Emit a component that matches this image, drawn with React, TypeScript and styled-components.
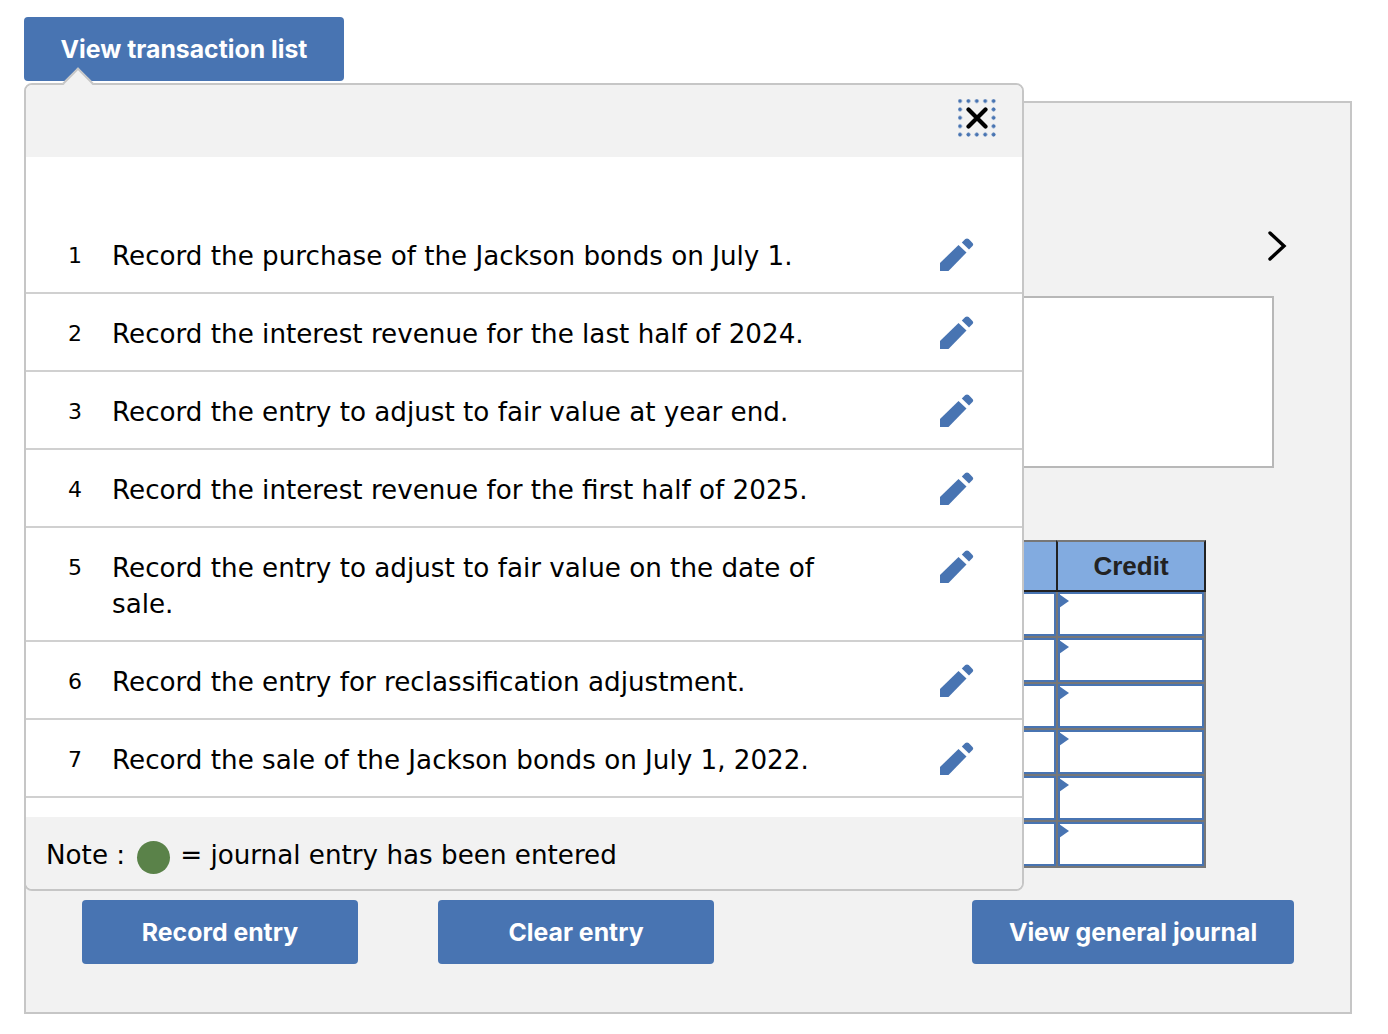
import React from "react";
import styled, { createGlobalStyle } from "styled-components";

const Blue = "#4874b2";
const PanelGrey = "#f2f2f2";
const LineGrey = "#c6c6c6";

const GlobalStyle = createGlobalStyle`
  html, body {
    margin: 0;
    padding: 0;
    background: #fff;
  }
`;

const Page = styled.div`
  position: relative;
  width: 1388px;
  height: 1034px;
  padding: 17px 36px 0 24px;
  box-sizing: border-box;
`;

const ActionButton = styled.button<{ $width: number; $offset?: number }>`
  display: block;
  flex: none;
  width: ${(p) => p.$width}px;
  height: 64px;
  margin-left: ${(p) => p.$offset ?? 0}px;
  padding: 0;
  border: 0;
  border-radius: 4px;
  background: ${Blue};
  color: #fff;
  font-family: "Inter", "Liberation Sans", sans-serif;
  font-size: 24.8px;
  font-weight: 700;
`;

const MainPanel = styled.div`
  box-sizing: border-box;
  height: 913px;
  margin-top: 20px;
  padding: 0 56px;
  border: 2px solid ${LineGrey};
  background: ${PanelGrey};
  display: flex;
  flex-direction: column;
`;

const NextRow = styled.div`
  display: flex;
  justify-content: flex-end;
  height: 193px;
  padding: 128px 7px 0 0;
  box-sizing: border-box;
  color: #000;
`;

const InfoBox = styled.div`
  box-sizing: border-box;
  height: 172px;
  margin-right: 20px;
  border: 2px solid #b8b8b8;
  background: #fff;
`;

const JournalTable = styled.div`
  margin: 72px 88px 0 0;
`;

const HeaderRow = styled.div`
  display: grid;
  grid-template-columns: 1fr 150px;
  height: 52px;
`;

const HeaderCell = styled.div`
  box-sizing: border-box;
  border-top: 2px solid #777;
  border-bottom: 2px solid #222;
  background: #82abe0;
  color: #222;
  font-family: "Liberation Sans", Arial, sans-serif;
  font-size: 26px;
  font-weight: 700;
  display: flex;
  align-items: center;
  justify-content: center;
`;

const CreditHeader = styled(HeaderCell)`
  border-left: 2px solid #222;
  border-right: 2px solid #222;
`;

const EntryGrid = styled.div`
  display: grid;
  grid-template-columns: 1fr 146px;
  gap: 2px;
  padding: 0 2px 2px 0;
  background: #777;
`;

const EntryCell = styled.div`
  position: relative;
  box-sizing: border-box;
  height: 44px;
  background: #fff;
  border: 2px solid ${Blue};
`;

const CellArrow = styled.span`
  position: absolute;
  left: -1px;
  top: 0;
  width: 0;
  height: 0;
  border-top: 7px solid transparent;
  border-bottom: 7px solid transparent;
  border-left: 10px solid ${Blue};
`;

const ButtonRow = styled.div`
  display: flex;
  margin-top: 32px;
`;

const Popover = styled.div`
  position: absolute;
  left: 24px;
  top: 83px;
  box-sizing: border-box;
  width: 1000px;
  height: 808px;
  border: 2px solid ${LineGrey};
  border-radius: 8px;
  background: #fff;
  display: flex;
  flex-direction: column;
  font-family: "DejaVu Sans", Verdana, sans-serif;
  color: #000;
`;

const Notch = styled.span`
  position: absolute;
  box-sizing: border-box;
  left: 41px;
  top: -13px;
  width: 22px;
  height: 22px;
  background: ${PanelGrey};
  border-left: 2px solid ${LineGrey};
  border-top: 2px solid ${LineGrey};
  transform: rotate(45deg);
`;

const PopoverHeader = styled.div`
  flex: none;
  height: 72px;
  padding: 14px 26px 0 0;
  box-sizing: border-box;
  background: ${PanelGrey};
  border-radius: 6px 6px 0 0;
  display: flex;
  justify-content: flex-end;
`;

const CloseButton = styled.button`
  width: 38px;
  height: 38px;
  padding: 0;
  border: 0;
  background-color: transparent;
  background-image: radial-gradient(circle, ${Blue} 1.7px, transparent 2.2px);
  background-size: 8.4px 8.4px;
  background-position: -2.2px -2.2px;
  position: relative;
  display: flex;
  align-items: center;
  justify-content: center;

  &::before {
    content: "";
    position: absolute;
    inset: 5px;
    background: ${PanelGrey};
  }

  svg {
    position: relative;
  }
`;

const TransactionList = styled.ol`
  flex: 1;
  margin: 0;
  padding: 59px 0 0;
  list-style: none;
`;

const TransactionRow = styled.li`
  display: flex;
  padding: 22px 48px 18px 42px;
  border-bottom: 2px solid #d0d0d0;
`;

const RowNumber = styled.span`
  width: 44px;
  flex: none;
  font-size: 22px;
  line-height: 36px;
`;

const RowText = styled.span`
  width: 730px;
  flex: none;
  font-size: 26.2px;
  line-height: 36px;
`;

const EditIcon = styled.svg`
  margin-left: auto;
  width: 34px;
  height: 34px;
  fill: ${Blue};
`;

const NoteBar = styled.div`
  flex: none;
  height: 72px;
  padding: 4px 0 0 20px;
  box-sizing: border-box;
  background: ${PanelGrey};
  border-radius: 0 0 6px 6px;
  display: flex;
  align-items: center;
  font-size: 26.2px;
  white-space: pre;
`;

const StatusDot = styled.span`
  width: 33px;
  height: 33px;
  margin: 5px 10px 0 12px;
  border-radius: 50%;
  background: #5a8249;
`;

const transactions = [
  "Record the purchase of the Jackson bonds on July 1.",
  "Record the interest revenue for the last half of 2024.",
  "Record the entry to adjust to fair value at year end.",
  "Record the interest revenue for the first half of 2025.",
  "Record the entry to adjust to fair value on the date of sale.",
  "Record the entry for reclassification adjustment.",
  "Record the sale of the Jackson bonds on July 1, 2022.",
];

const Pencil = () => (
  <EditIcon viewBox="0 0 34 34">
    <path d="M18.5 7 L26.5 14.5 L8.5 33 L0 33 L0 25 Z" />
    <path d="M21.8 4.6 L25.3 1.1 Q27 -.3 28.7 1.1 L32.5 4.9 Q33.9 6.4 32.5 8 L29 11.5 Z" />
  </EditIcon>
);

export default function App() {
  return (
    <Page>
      <GlobalStyle />
      <ActionButton $width={320}>View transaction list</ActionButton>

      <MainPanel>
        <NextRow>
          <svg width="20" height="30" viewBox="0 0 20 30" fill="none" stroke="currentColor" strokeWidth="3.4" strokeLinecap="round">
            <path d="M3 2 L17 15 L3 28" />
          </svg>
        </NextRow>
        <InfoBox />
        <JournalTable>
          <HeaderRow>
            <HeaderCell />
            <CreditHeader>Credit</CreditHeader>
          </HeaderRow>
          <EntryGrid>
            {Array.from({ length: 12 }, (_, i) => (
              <EntryCell key={i}>{i % 2 === 1 && <CellArrow />}</EntryCell>
            ))}
          </EntryGrid>
        </JournalTable>
        <ButtonRow>
          <ActionButton $width={276}>Record entry</ActionButton>
          <ActionButton $width={276} $offset={80}>Clear entry</ActionButton>
          <ActionButton $width={322} $offset={258}>View general journal</ActionButton>
        </ButtonRow>
      </MainPanel>

      <Popover>
        <Notch />
        <PopoverHeader>
          <CloseButton aria-label="Close">
            <svg width="22" height="22" viewBox="0 0 22 22" stroke="#000" strokeWidth="4.2" strokeLinecap="round">
              <path d="M2.5 2.5 L19.5 19.5 M19.5 2.5 L2.5 19.5" />
            </svg>
          </CloseButton>
        </PopoverHeader>
        <TransactionList>
          {transactions.map((text, i) => (
            <TransactionRow key={i}>
              <RowNumber>{i + 1}</RowNumber>
              <RowText>{text}</RowText>
              <Pencil />
            </TransactionRow>
          ))}
        </TransactionList>
        <NoteBar>
          Note :<StatusDot />= journal entry has been entered
        </NoteBar>
      </Popover>
    </Page>
  );
}
